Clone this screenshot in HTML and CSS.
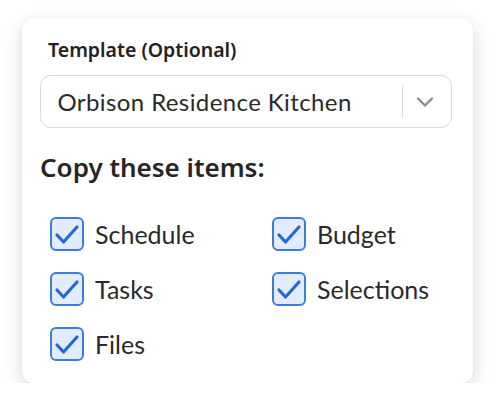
FILE: index.html
```html
<!DOCTYPE html>
<html>
<head>
<meta charset="utf-8">
<link rel="stylesheet" href="styles.css">
</head>
<body>
<div class="card">
  <div class="field-label">Template (Optional)</div>
  <div class="select">
    <span class="select-value">Orbison Residence Kitchen</span>
    <span class="select-divider"></span>
    <svg class="chevron" width="18" height="10" viewBox="0 0 18 10"><path d="M2 1.5 L9 8.5 L16 1.5" fill="none" stroke="#8c8c8c" stroke-width="2.4" stroke-linecap="round" stroke-linejoin="round"/></svg>
  </div>
  <div class="section-title">Copy these items:</div>
  <div class="items">
    <label class="item"><span class="box"><svg width="34" height="34" viewBox="0 0 34 34"><path d="M7 18 L13.5 25 L27 10" fill="none" stroke="#2667dd" stroke-width="3.2" stroke-linecap="round" stroke-linejoin="round"/></svg></span><span class="item-text">Schedule</span></label>
    <label class="item"><span class="box"><svg width="34" height="34" viewBox="0 0 34 34"><path d="M7 18 L13.5 25 L27 10" fill="none" stroke="#2667dd" stroke-width="3.2" stroke-linecap="round" stroke-linejoin="round"/></svg></span><span class="item-text">Budget</span></label>
    <label class="item"><span class="box"><svg width="34" height="34" viewBox="0 0 34 34"><path d="M7 18 L13.5 25 L27 10" fill="none" stroke="#2667dd" stroke-width="3.2" stroke-linecap="round" stroke-linejoin="round"/></svg></span><span class="item-text">Tasks</span></label>
    <label class="item"><span class="box"><svg width="34" height="34" viewBox="0 0 34 34"><path d="M7 18 L13.5 25 L27 10" fill="none" stroke="#2667dd" stroke-width="3.2" stroke-linecap="round" stroke-linejoin="round"/></svg></span><span class="item-text">Selections</span></label>
    <label class="item"><span class="box"><svg width="34" height="34" viewBox="0 0 34 34"><path d="M7 18 L13.5 25 L27 10" fill="none" stroke="#2667dd" stroke-width="3.2" stroke-linecap="round" stroke-linejoin="round"/></svg></span><span class="item-text">Files</span></label>
  </div>
</div>
</body>
</html>
```

FILE: styles.css
```css
html, body {
  margin: 0;
  padding: 0;
  background: #ffffff;
}
body {
  font-family: Lato, "Noto Sans", sans-serif;
  color: #2a2a2a;
}
.card {
  box-sizing: border-box;
  margin: 18px 0 0 22px;
  width: 451px;
  height: 365px;
  background: #ffffff;
  border-radius: 12px;
  box-shadow: 0 6px 20px rgba(0, 0, 0, 0.15), 0 0 3px rgba(0, 0, 0, 0.05);
  padding: 19.5px 21px 0 18px;
}
.field-label {
  font-family: "Noto Sans", sans-serif;
  font-size: 19.5px;
  font-weight: 600;
  line-height: 24px;
  padding-left: 8px;
  color: #222;
}
.select {
  box-sizing: border-box;
  margin-top: 13.5px;
  height: 53px;
  border: 1.5px solid #d9d9d9;
  border-radius: 11px;
  display: flex;
  align-items: center;
  padding: 0 17px 0 16.5px;
}
.select-value {
  flex: 1;
  font-size: 24px;
  letter-spacing: 0.4px;
  line-height: 30px;
  color: #2a2a2a;
}
.select-divider {
  width: 1.5px;
  height: 33px;
  background: #dcdcdc;
  margin-right: 13px;
}
.chevron {
  display: block;
}
.section-title {
  font-family: "Noto Sans", sans-serif;
  margin-top: 23px;
  font-size: 26px;
  font-weight: 600;
  line-height: 32px;
  color: #262626;
}
.items {
  margin-top: 34px;
  display: grid;
  grid-template-columns: 222px 1fr;
  row-gap: 21px;
  padding-left: 10px;
}
.item {
  display: flex;
  align-items: center;
  gap: 11px;
  height: 34px;
}
.box {
  box-sizing: border-box;
  flex: none;
  width: 34px;
  height: 34px;
  border: 2px solid #3a7ce6;
  border-radius: 6px;
  background: #e3ecfd;
  display: block;
  position: relative;
}
.box svg {
  position: absolute;
  left: -2px;
  top: -2px;
}
.item-text {
  font-size: 25px;
  line-height: 30px;
  color: #2a2a2a;
}
```
